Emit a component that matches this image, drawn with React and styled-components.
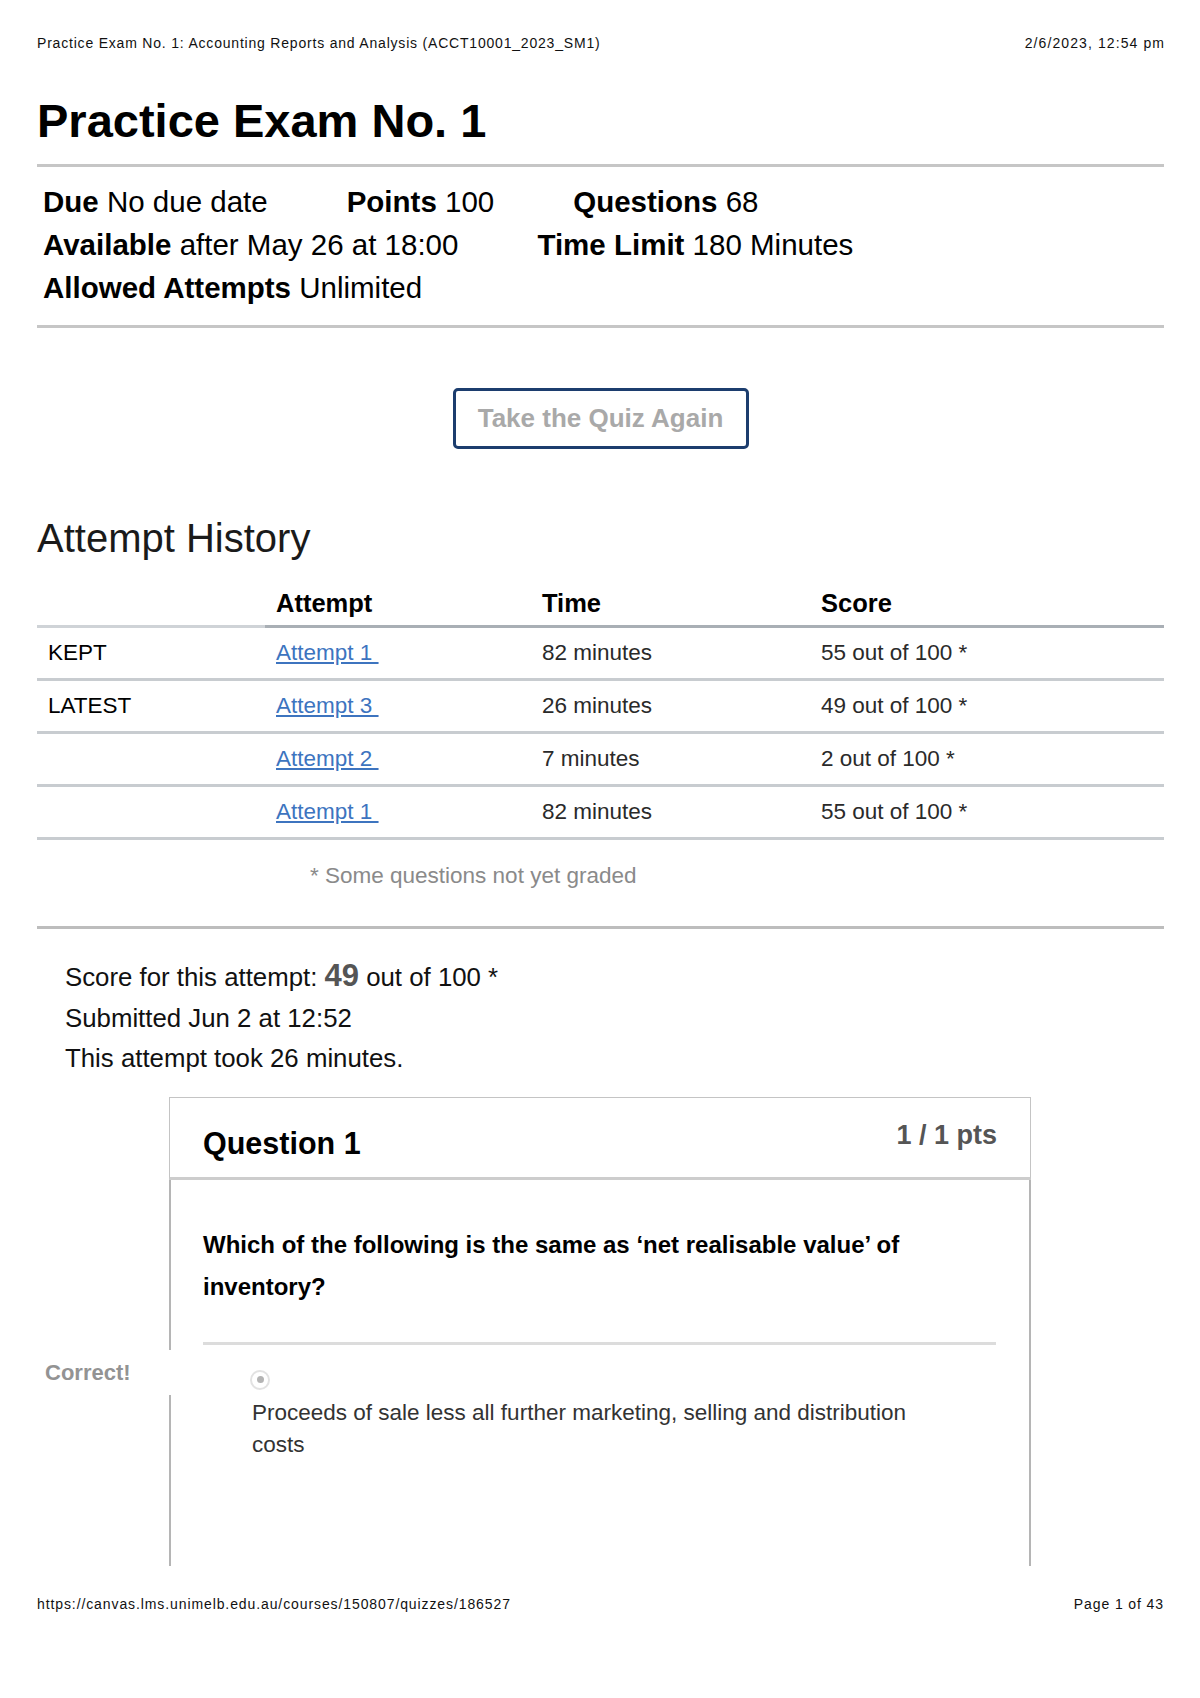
import React from "react";
import styled, { createGlobalStyle } from "styled-components";

const GlobalStyle = createGlobalStyle`
  html, body { margin: 0; padding: 0; background: #fff; }
  body { font-family: "Liberation Sans", Arial, Helvetica, sans-serif; color: #000; }
  * { box-sizing: border-box; }
`;

const Page = styled.div`
  width: 1200px;
  min-height: 1698px;
  padding: 33px 36px 0 37px;
  background: #fff;
`;

const PrintBar = styled.div`
  display: flex;
  justify-content: space-between;
  align-items: center;
  font-size: 14px;
  line-height: 20px;
  letter-spacing: ${(p) => p.$spacing || "0.8px"};
  color: #111;
  margin-top: ${(p) => p.$mt || "0"};
`;

const Stamp = styled.span`
  letter-spacing: 1.1px;
  margin-right: -1.1px;
`;

const Title = styled.h1`
  margin: 40px 0 0;
  font-size: 47px;
  line-height: 56px;
  font-weight: 700;
  color: #000;
`;

const Rule = styled.div`
  height: ${(p) => p.$h || 3}px;
  background: ${(p) => p.$color || "#c6c6c6"};
  margin-top: ${(p) => p.$mt}px;
`;

const Details = styled.ul`
  list-style: none;
  margin: 0;
  display: flex;
  flex-wrap: wrap;
  column-gap: 79px;
  padding: 13px 0 16px 6px;
  font-size: 29.5px;
  line-height: 43px;
`;

const Detail = styled.li`
  white-space: nowrap;
  b { font-weight: 700; }
`;

const ButtonRow = styled.div`
  display: flex;
  justify-content: center;
  margin-top: 60px;
`;

const QuizButton = styled.button`
  width: 296px;
  height: 61px;
  border: 3px solid #1c3d6e;
  border-radius: 5px;
  background: #fff;
  color: #a9a9a9;
  font-family: inherit;
  font-size: 26px;
  font-weight: 700;
  padding: 0;
`;

const Heading = styled.h2`
  margin: 65px 0 0;
  font-size: 40px;
  line-height: 48px;
  font-weight: 400;
  color: #1a1a1a;
`;

const Table = styled.table`
  margin-top: 18px;
  width: 100%;
  border-collapse: collapse;
  table-layout: fixed;
`;

const Th = styled.th`
  text-align: left;
  font-size: 25.5px;
  font-weight: 700;
  line-height: 30px;
  padding: 8px 11px 7px;
  border-bottom: 3px solid ${(p) => (p.$light ? "#cfd3d7" : "#a9afb5")};
  color: #000;
`;

const Td = styled.td`
  font-size: 22.5px;
  line-height: 26px;
  padding: 12px 11px;
  border-bottom: 3px solid #c8ccd0;
  color: ${(p) => (p.$strong ? "#000" : "#2a2a2a")};
  white-space: nowrap;
`;

const AttemptLink = styled.a`
  color: #3d74bf;
  text-decoration: underline;
  white-space: pre;
`;

const Footnote = styled.div`
  margin-top: 21px;
  padding-left: 273px;
  font-size: 22.5px;
  line-height: 30px;
  color: #8a8a8a;
`;

const ScoreBlock = styled.div`
  margin-top: 28px;
  padding-left: 28px;
  font-size: 25.8px;
  line-height: 40.5px;
  color: #111;
`;

const BigScore = styled.span`
  font-size: 31px;
  font-weight: 700;
  color: #555;
  line-height: 1;
`;

const QuestionBox = styled.div`
  position: relative;
  width: 862px;
  margin: 18px 0 0 132px;
`;

const QuestionHeader = styled.div`
  height: 83px;
  display: flex;
  justify-content: space-between;
  align-items: flex-start;
  padding: 19px 33px 0 33px;
  border: 1px solid #c4c4c4;
  border-bottom: 3px solid #cdcdcd;
`;

const QuestionName = styled.div`
  margin-top: 8px;
  font-size: 30.5px;
  line-height: 36px;
  font-weight: 700;
  color: #000;
`;

const Points = styled.div`
  font-size: 27px;
  line-height: 36px;
  font-weight: 700;
  color: #555;
`;

const QuestionBody = styled.div`
  height: 386px;
  padding: 44px 33px 0 32px;
  border-left: 2px solid #b5b5b5;
  border-right: 2px solid #b5b5b5;
`;

const QuestionText = styled.div`
  font-size: 24px;
  line-height: 42px;
  font-weight: 700;
  color: #000;
`;

const Divider = styled.div`
  height: 3px;
  background: #dcdcdc;
  margin-top: 34px;
`;

const Answer = styled.div`
  margin-top: 25px;
  padding-left: 49px;
`;

const Radio = styled.span`
  display: flex;
  align-items: center;
  justify-content: center;
  width: 20px;
  height: 20px;
  margin-left: -2px;
  border-radius: 50%;
  border: 2px solid #e2e2e2;
  background: #fff;
  &::after {
    content: "";
    width: 7px;
    height: 7px;
    border-radius: 50%;
    background: #b4b4b4;
  }
`;

const AnswerText = styled.div`
  margin-top: 7px;
  max-width: 700px;
  font-size: 22.5px;
  line-height: 32px;
  color: #333;
`;

const CorrectLabel = styled.div`
  position: absolute;
  left: -132px;
  top: 253px;
  width: 140px;
  height: 45px;
  padding-left: 8px;
  background: #fff;
  font-size: 22px;
  line-height: 45px;
  font-weight: 700;
  color: #939393;
`;

const attempts = [
  { status: "KEPT", n: 1, time: "82 minutes", score: "55 out of 100 *" },
  { status: "LATEST", n: 3, time: "26 minutes", score: "49 out of 100 *" },
  { status: "", n: 2, time: "7 minutes", score: "2 out of 100 *" },
  { status: "", n: 1, time: "82 minutes", score: "55 out of 100 *" },
];

export default function App() {
  return (
    <>
      <GlobalStyle />
      <Page>
        <PrintBar>
          <span>Practice Exam No. 1: Accounting Reports and Analysis (ACCT10001_2023_SM1)</span>
          <Stamp>2/6/2023, 12:54 pm</Stamp>
        </PrintBar>

        <Title>Practice Exam No. 1</Title>
        <Rule $mt={15} />

        <Details>
          <Detail><b>Due</b> No due date</Detail>
          <Detail><b>Points</b> 100</Detail>
          <Detail><b>Questions</b> 68</Detail>
          <Detail><b>Available</b> after May 26 at 18:00</Detail>
          <Detail><b>Time Limit</b> 180 Minutes</Detail>
          <Detail><b>Allowed Attempts</b> Unlimited</Detail>
        </Details>
        <Rule $mt={0} />

        <ButtonRow>
          <QuizButton>Take the Quiz Again</QuizButton>
        </ButtonRow>

        <Heading>Attempt History</Heading>
        <Table>
          <colgroup>
            <col style={{ width: 228 }} />
            <col style={{ width: 266 }} />
            <col style={{ width: 279 }} />
            <col />
          </colgroup>
          <thead>
            <tr>
              <Th $light></Th>
              <Th>Attempt</Th>
              <Th>Time</Th>
              <Th>Score</Th>
            </tr>
          </thead>
          <tbody>
            {attempts.map((a, i) => (
              <tr key={i}>
                <Td $strong>{a.status}</Td>
                <Td>
                  <AttemptLink href="#">{`Attempt ${a.n} `}</AttemptLink>
                </Td>
                <Td>{a.time}</Td>
                <Td>{a.score}</Td>
              </tr>
            ))}
          </tbody>
        </Table>
        <Footnote>* Some questions not yet graded</Footnote>
        <Rule $mt={35} $color="#bdbdbd" />

        <ScoreBlock>
          <div>
            Score for this attempt: <BigScore>49</BigScore> out of 100 *
          </div>
          <div>Submitted Jun 2 at 12:52</div>
          <div>This attempt took 26 minutes.</div>
        </ScoreBlock>

        <QuestionBox>
          <QuestionHeader>
            <QuestionName>Question 1</QuestionName>
            <Points>1 / 1 pts</Points>
          </QuestionHeader>
          <QuestionBody>
            <QuestionText>
              Which of the following is the same as ‘net realisable value’ of inventory?
            </QuestionText>
            <Divider />
            <Answer>
              <Radio />
              <AnswerText>
                Proceeds of sale less all further marketing, selling and distribution costs
              </AnswerText>
            </Answer>
          </QuestionBody>
          <CorrectLabel>Correct!</CorrectLabel>
        </QuestionBox>

        <PrintBar $mt="28px" $spacing="0.9px">
          <span>https://canvas.lms.unimelb.edu.au/courses/150807/quizzes/186527</span>
          <span>Page 1 of 43</span>
        </PrintBar>
      </Page>
    </>
  );
}
